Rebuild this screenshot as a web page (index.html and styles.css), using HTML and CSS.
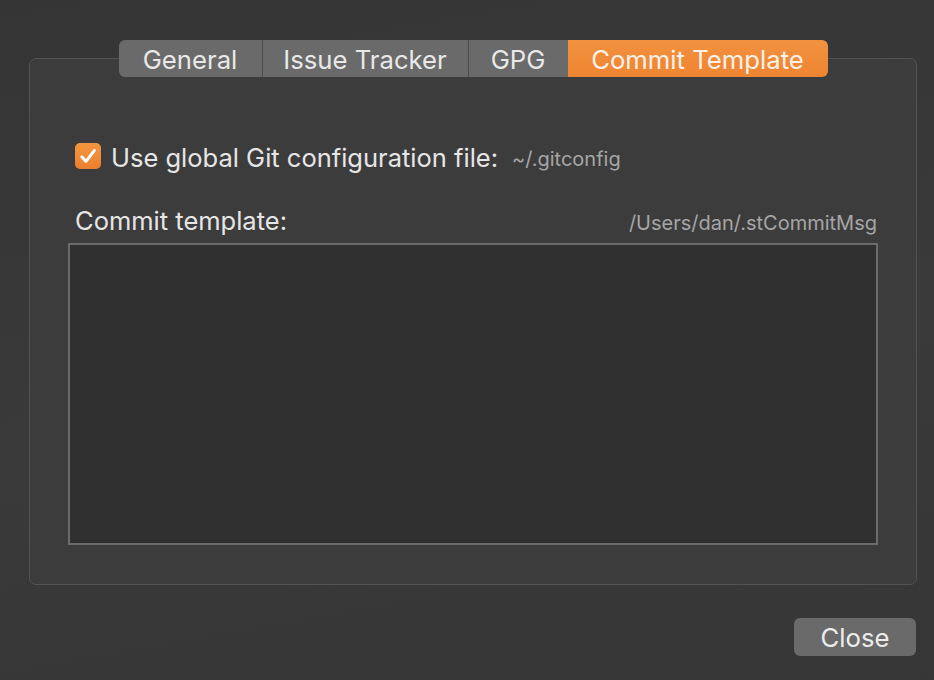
FILE: index.html
```html
<!DOCTYPE html>
<html>
<head>
<meta charset="utf-8">
<link rel="stylesheet" href="styles.css">
</head>
<body>
<div class="window">
  <div class="tabs">
    <div class="tab tab-general">General</div>
    <div class="tab tab-issue">Issue Tracker</div>
    <div class="tab tab-gpg">GPG</div>
    <div class="tab tab-commit active">Commit Template</div>
  </div>
  <div class="group">
    <div class="check-row">
      <span class="checkbox">
        <svg width="26" height="26" viewBox="0 0 26 26"><path d="M6.8 13.8 L11 18.4 L19.4 7.4" fill="none" stroke="#ffffff" stroke-width="3" stroke-linecap="round" stroke-linejoin="round"/></svg>
      </span>
      <span class="check-label">Use global Git configuration file:</span>
      <span class="small-path">~/.gitconfig</span>
    </div>
    <div class="label-row">
      <span class="label">Commit template:</span>
      <span class="small-path">/Users/dan/.stCommitMsg</span>
    </div>
    <div class="textarea"></div>
  </div>
  <div class="footer">
    <div class="button">Close</div>
  </div>
</div>
</body>
</html>
```

FILE: styles.css
```css
html, body {
  margin: 0;
  padding: 0;
}
body {
  width: 934px;
  height: 680px;
  overflow: hidden;
  background: linear-gradient(170deg, #353535 0%, #3a3a3a 55%, #363636 100%);
  font-family: "Inter", "Liberation Sans", sans-serif;
  color: #e4e4e4;
}
.window {
  padding: 40px 18px 0 29px;
}
.tabs {
  position: relative;
  z-index: 2;
  display: flex;
  justify-content: center;
  width: 888px;
  height: 37px;
}
.tab {
  display: flex;
  align-items: center;
  justify-content: center;
  height: 37px;
  padding-top: 1px;
  background: #6a6a6a;
  color: #e8e8e8;
  font-size: 25.7px;
  border-left: 1px solid #4d4d4d;
  box-sizing: border-box;
}
.tab-general {
  width: 143px;
  border-left: none;
  border-radius: 6px 0 0 6px;
}
.tab-issue { width: 206px; }
.tab-gpg { width: 100px; }
.tab-commit {
  width: 260px;
  border-radius: 0 6px 6px 0;
}
.tab.active {
  background: linear-gradient(#f2923f, #ee8432);
  color: #fbf1e8;
  border-left: none;
}
.group {
  margin-top: -19px;
  width: 888px;
  height: 527px;
  box-sizing: border-box;
  border: 1px solid #535353;
  border-radius: 7px;
  background: #3c3c3c;
  padding: 84px 38px 0 38px;
}
.check-row {
  display: flex;
  align-items: center;
  height: 26px;
  padding-left: 7px;
}
.checkbox {
  width: 26px;
  height: 26px;
  border-radius: 5px;
  background: linear-gradient(#f39640, #ec8030);
  display: flex;
  flex: none;
}
.check-label {
  margin-left: 10px;
  margin-top: 2px;
  font-size: 25.5px;
  color: #e6e6e6;
}
.small-path {
  font-size: 20px;
  color: #a6a6a6;
}
.check-row .small-path {
  margin-left: 14px;
  margin-top: 5px;
}
.label-row {
  margin-top: 36px;
  height: 34px;
  display: flex;
  justify-content: space-between;
  align-items: baseline;
  padding: 0 1px 0 7px;
}
.label {
  font-size: 25.5px;
  color: #e6e6e6;
}
.textarea {
  margin-top: 4px;
  height: 302px;
  box-sizing: border-box;
  border: 2px solid #6b6b6b;
  background: #303030;
}
.footer {
  display: flex;
  justify-content: flex-end;
  width: 887px;
  margin-top: 33px;
}
.button {
  width: 122px;
  height: 38px;
  box-sizing: border-box;
  border-radius: 6px;
  background: #6a6a6a;
  color: #ececec;
  font-size: 25.7px;
  display: flex;
  align-items: center;
  justify-content: center;
}
```
